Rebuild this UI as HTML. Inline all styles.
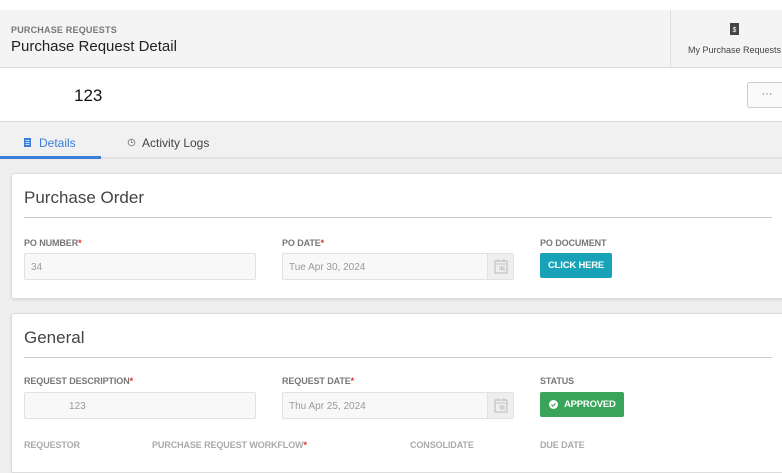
<!DOCTYPE html>
<html><head><meta charset="utf-8"><style>
*{box-sizing:border-box;margin:0;padding:0}
body{width:782px;height:446px;overflow:hidden;background:#eeeeee;font-family:"Liberation Sans",sans-serif;position:relative}
.top{position:absolute;left:0;top:0;width:782px;height:10px;background:#fff}
.hdr{position:absolute;left:0;top:10px;width:782px;height:58px;background:#f4f4f4;border-bottom:1px solid #dcdcdc}
.hdr .sm{position:absolute;left:11px;top:15px;font-size:9px;font-weight:bold;color:#777;letter-spacing:.2px}
.hdr .tt{position:absolute;left:11px;top:28px;font-size:15px;color:#222}
.mpr{position:absolute;left:670px;top:0;width:112px;height:57px;border-left:1px solid #ddd;text-align:center}
.mpr .lb{position:absolute;left:17px;top:35px;font-size:9px;color:#444;white-space:nowrap}
.bar{position:absolute;left:0;top:68px;width:782px;height:54px;background:#fff;border-bottom:1px solid #d8d8d8}
.bar .n{position:absolute;left:74px;top:18px;font-size:17px;color:#111}
.dots{position:absolute;left:747px;top:14px;width:40px;height:26px;border:1px solid #ccc;border-radius:3px;background:#fafafa;font-size:11px;color:#666;text-align:center;line-height:22px}
.tabs{position:absolute;left:0;top:122px;width:782px;height:37px;background:#f1f1f1;border-bottom:2px solid #e2e2e2}
.tab{position:absolute;top:14px;font-size:12px}
.ul{position:absolute;left:0;top:34px;width:101px;height:3px;background:#3b7dd8}
.card{position:absolute;left:11px;width:790px;background:#fff;border:1px solid #ddd;border-radius:3px;box-shadow:0 1px 2px rgba(0,0,0,.1)}
.card h2{position:absolute;left:12px;top:14px;font-size:17px;font-weight:normal;color:#444}
.card .hr{position:absolute;left:12px;top:43px;width:748px;height:1px;background:#ccc}
.lbl{position:absolute;font-size:9px;font-weight:bold;color:#777;letter-spacing:-.1px}
.lbl b{color:#d33}
.inp{position:absolute;width:232px;height:27px;background:#f8f8f8;border:1px solid #e2e2e2;border-radius:2px;font-size:10px;color:#999;padding:8px 6px}
.cal{position:absolute;right:0;top:0;width:26px;height:25px;background:#eee;border-left:1px solid #e2e2e2}
.btn{position:absolute;height:25px;border-radius:2px;color:#fff;font-size:9.5px;font-weight:bold;line-height:25px;padding:0 8px;letter-spacing:-.2px}
</style></head><body>
<div class="top"></div>
<div class="hdr"><div class="sm">PURCHASE REQUESTS</div><div class="tt">Purchase Request Detail</div>
<div class="mpr"><svg style="position:absolute;left:59px;top:13px" width="9" height="12"><rect width="9" height="12" fill="#444"/><text x="4.5" y="9" font-size="7" fill="#fff" text-anchor="middle" font-family="Liberation Sans">$</text></svg><div class="lb">My Purchase Requests</div></div></div>
<div class="bar"><div class="n">123</div><div class="dots">···</div></div>
<div class="tabs">
<svg style="position:absolute;left:24px;top:16px" width="7" height="9"><rect width="7" height="9" fill="#3b7dd8"/><path d="M1.5 2.5h4M1.5 4.5h4M1.5 6.5h4" stroke="#fff" stroke-width=".8"/></svg>
<div class="tab" style="left:39px;color:#3b7dd8">Details</div>
<svg style="position:absolute;left:127px;top:16px" width="9" height="9"><circle cx="4.5" cy="4.5" r="3.3" fill="none" stroke="#888" stroke-width="1"/><path d="M4.5 2.5v2h1.5" stroke="#888" fill="none" stroke-width=".9"/></svg>
<div class="tab" style="left:142px;color:#444">Activity Logs</div>
<div class="ul"></div></div>

<div class="card" style="top:173px;height:126px">
<h2>Purchase Order</h2><div class="hr"></div>
<div class="lbl" style="left:12px;top:64px">PO NUMBER<b>*</b></div>
<div class="inp" style="left:12px;top:79px">34</div>
<div class="lbl" style="left:270px;top:64px">PO DATE<b>*</b></div>
<div class="inp" style="left:270px;top:79px">Tue Apr 30, 2024<div class="cal"><svg style="position:absolute;left:6px;top:5px" width="14" height="15"><rect x="1" y="2" width="12" height="12" fill="none" stroke="#bbb"/><path d="M1 5h12M4 0v3M10 0v3M5 8h5v4M5 10h5M7.5 8v4" stroke="#bbb" fill="none" stroke-width=".8"/></svg></div></div>
<div class="lbl" style="left:528px;top:64px">PO DOCUMENT</div>
<div class="btn" style="left:528px;top:79px;background:#17a2b8">CLICK HERE</div>
</div>

<div class="card" style="top:313px;height:160px">
<h2>General</h2><div class="hr"></div>
<div class="lbl" style="left:12px;top:62px">REQUEST DESCRIPTION<b>*</b></div>
<div class="inp" style="left:12px;top:78px;padding-left:44px">123</div>
<div class="lbl" style="left:270px;top:62px">REQUEST DATE<b>*</b></div>
<div class="inp" style="left:270px;top:78px">Thu Apr 25, 2024<div class="cal"><svg style="position:absolute;left:6px;top:5px" width="14" height="15"><rect x="1" y="2" width="12" height="12" fill="none" stroke="#bbb"/><path d="M1 5h12M4 0v3M10 0v3M5 8h5v4M5 10h5M7.5 8v4" stroke="#bbb" fill="none" stroke-width=".8"/></svg></div></div>
<div class="lbl" style="left:528px;top:62px">STATUS</div>
<div class="btn" style="left:528px;top:78px;background:#3aa55a;padding-left:24px">APPROVED<svg style="position:absolute;left:9px;top:8px" width="9" height="9"><circle cx="4.5" cy="4.5" r="4.5" fill="#fff"/><path d="M2.5 4.7l1.4 1.4 2.6-2.7" stroke="#3aa55a" fill="none" stroke-width="1.1"/></svg></div>
<div class="lbl" style="left:12px;top:126px;color:#aaa">REQUESTOR</div>
<div class="lbl" style="left:140px;top:126px;color:#aaa">PURCHASE REQUEST WORKFLOW<b>*</b></div>
<div class="lbl" style="left:398px;top:126px;color:#aaa">CONSOLIDATE</div>
<div class="lbl" style="left:528px;top:126px;color:#aaa">DUE DATE</div>
</div>
</body></html>
